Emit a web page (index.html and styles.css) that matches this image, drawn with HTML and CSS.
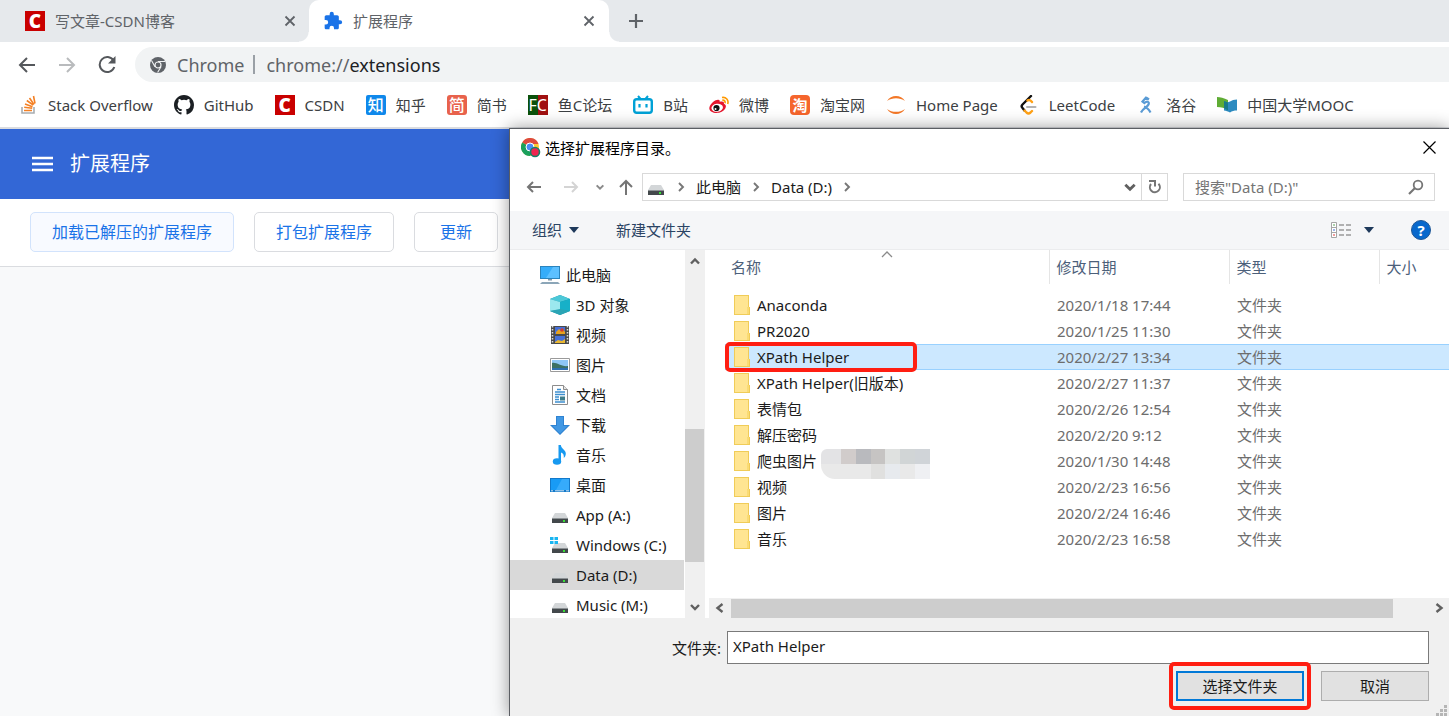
FILE: index.html
```html
<!DOCTYPE html>
<html lang="zh-CN">
<head>
  <meta charset="UTF-8" />
  <title>扩展程序</title>
  <meta name="viewport" content="width=device-width, initial-scale=1" />
  <link rel="stylesheet" href="styles.css">
</head>
<body>
  <!-- shared icons -->
  <svg class="defs" aria-hidden="true">
    <symbol id="i-close" viewBox="0 0 12 12"><path d="M1.5 1.5l9 9M10.5 1.5l-9 9" fill="none" stroke="#5f6368" stroke-width="1.8"/></symbol>
    <symbol id="i-folder" viewBox="0 0 16 20">
      <path d="M0 0h15v12h1v8H0z" fill="#f0cc58"/>
      <path d="M1 1h13v11l-1 1v6H1z" fill="#ffe592"/>
      <path d="M13 19v-6l1-1h1v7z" fill="#fadb74"/>
    </symbol>
    <symbol id="i-drive" viewBox="0 0 20 20">
      <path d="M5 8h10l3 5H2z" fill="#d3d6d8"/>
      <path d="M2 13h16v5H2z" fill="#43484b"/>
      <path d="M2 13h16v1H2z" fill="#8d9295"/>
      <path d="M13 15h2v2h-2z" fill="#38e038"/>
    </symbol>
    <symbol id="i-up" viewBox="0 0 12 12"><path d="M2 8.500l4-4 4 4" fill="none" stroke="#606060" stroke-width="2.400"/></symbol>
    <symbol id="i-down" viewBox="0 0 12 12"><path d="M2 4l4 4 4-4" fill="none" stroke="#606060" stroke-width="2.400"/></symbol>
    <symbol id="i-left" viewBox="0 0 12 12"><path d="M8.500 2l-5 4 5 4" fill="none" stroke="#606060" stroke-width="2.400"/></symbol>
    <symbol id="i-right" viewBox="0 0 12 12"><path d="M3.500 2l5 4-5 4" fill="none" stroke="#606060" stroke-width="2.400"/></symbol>
    <symbol id="i-crumb" viewBox="0 0 12 12"><path d="M4 2l4 4-4 4" fill="none" stroke="#777" stroke-width="1.900"/></symbol>
  </svg>

  <header class="browser">
    <div class="tabs">
      <div class="tab">
        <span class="logo csdn">C</span>
        <span class="tab-title">写文章-CSDN博客</span>
        <button aria-label="关闭"><svg width="12" height="12"><use href="#i-close"/></svg></button>
      </div>
      <div class="tab active">
        <svg width="20" height="20" viewBox="0 0 24 24" fill="#1a73e8"><path d="M20.500 11H19V7c0-1.100-.9-2-2-2h-4V3.500a2.500 2.500 0 0 0-5 0V5H4c-1.100 0-2 .9-2 2v3.800h1.500a2.700 2.700 0 0 1 0 5.400H2V20c0 1.100.9 2 2 2h3.800v-1.500a2.700 2.700 0 0 1 5.400 0V22H17c1.100 0 2-.9 2-2v-4h1.500a2.500 2.500 0 0 0 0-5z"/></svg>
        <span class="tab-title">扩展程序</span>
        <button aria-label="关闭"><svg width="12" height="12"><use href="#i-close"/></svg></button>
      </div>
      <button class="new-tab" aria-label="新标签页"><svg width="16" height="16" viewBox="0 0 16 16"><path d="M8 1v14M1 8h14" stroke="#5f6368" stroke-width="2.200"/></svg></button>
    </div>

    <div class="toolbar">
      <button aria-label="后退"><svg width="18" height="18" viewBox="0 0 18 18"><path d="M17 9H2M9 2L2 9l7 7" fill="none" stroke="#55585c" stroke-width="2"/></svg></button>
      <button aria-label="前进"><svg width="18" height="18" viewBox="0 0 18 18"><path d="M1 9h15M9 2l7 7-7 7" fill="none" stroke="#b9bbbd" stroke-width="2"/></svg></button>
      <button aria-label="重新加载"><svg width="18" height="18" viewBox="0 0 18 18"><path d="M15.500 4.500A7.500 7.500 0 1 0 16.300 11" fill="none" stroke="#55585c" stroke-width="2"/><path d="M17.500 0v7.500H10z" fill="#55585c"/></svg></button>
      <div class="omnibox">
        <svg width="16" height="16" viewBox="0 0 16 16"><circle cx="8" cy="8" r="8" fill="#5f6368"/><circle cx="8" cy="8" r="3" fill="#5f6368" stroke="#f1f3f4" stroke-width="1.200"/><path d="M8 4.500h7M5 9.700L1.500 3.600M11 9.700L7.600 15.600" stroke="#f1f3f4" stroke-width="1.100"/></svg>
        <span>Chrome</span>
        <span class="bar"></span>
        <span>chrome://<b>extensions</b></span>
      </div>
    </div>

    <nav class="bookmarks">
      <a href="#"><svg width="20" height="20" viewBox="0 0 20 20" fill="none"><path d="M4 12v6h12v-6" stroke="#a8adb1" stroke-width="1.600"/><path d="M6 15.500h8M6.200 12.300l8 1M7 9l7.500 2.700M8.800 5.500l6.500 4.700M11.500 3l4.500 6.500M15.500 1l1.500 7.500" stroke="#f48024" stroke-width="1.600"/></svg>Stack Overflow</a>
      <a href="#"><svg width="20" height="20" viewBox="0 0 16 16" fill="#1b1f23"><path d="M8 0C3.580 0 0 3.580 0 8c0 3.540 2.290 6.530 5.470 7.590.4.070.55-.17.55-.38 0-.19-.01-.82-.01-1.490-2.010.37-2.530-.49-2.690-.94-.09-.23-.48-.94-.82-1.130-.28-.15-.68-.52-.01-.53.63-.01 1.080.58 1.230.82.72 1.210 1.870.87 2.330.66.07-.52.28-.87.51-1.070-1.780-.2-3.640-.89-3.640-3.950 0-.87.31-1.590.82-2.150-.08-.2-.36-1.020.08-2.120 0 0 .67-.21 2.200.82a7.600 7.600 0 0 1 4 0c1.530-1.040 2.200-.82 2.200-.82.44 1.100.16 1.920.08 2.120.51.56.82 1.270.82 2.150 0 3.070-1.870 3.750-3.650 3.950.29.25.54.73.54 1.480 0 1.070-.01 1.930-.01 2.200 0 .21.15.46.55.38A8 8 0 0 0 16 8c0-4.420-3.580-8-8-8z"/></svg>GitHub</a>
      <a href="#"><span class="logo csdn">C</span>CSDN</a>
      <a href="#"><span class="logo zhihu">知</span>知乎</a>
      <a href="#"><span class="logo jianshu">简</span>简书</a>
      <a href="#"><span class="logo fishc">FC</span>鱼C论坛</a>
      <a href="#"><svg width="20" height="20" viewBox="0 0 20 20" fill="none" stroke="#00a1d6"><path d="M5 1l3 3.500M15 1l-3 3.500" stroke-width="2"/><rect x="1.200" y="4.200" width="17.600" height="13.600" rx="2.500" stroke-width="2.400"/><path d="M6.500 9v3.500M13.500 9v3.500" stroke-width="2.200"/></svg>B站</a>
      <a href="#"><svg width="20" height="20" viewBox="0 0 20 20"><path d="M8 5c2-.8 3 0 2.700 1.800 3-1 5 0 4.200 2 2 .8 2.600 2.500 1.500 4.500C13.500 19.500 1 19.500.3 13.500.3 10 4.500 5.500 8 5z" fill="#e6162d"/><ellipse cx="8.200" cy="12.800" rx="5.800" ry="4" fill="#fff" transform="rotate(-8 8.200 12.800)"/><circle cx="7.500" cy="13" r="3.100" fill="#111"/><circle cx="6.500" cy="14" r="1" fill="#fff"/><path d="M13 2.500c4-.7 7 2.500 5.700 6.500M13.300 5.200c2-.3 3.300 1 2.700 3" fill="none" stroke="#f90" stroke-width="1.600"/></svg>微博</a>
      <a href="#"><span class="logo taobao">淘</span>淘宝网</a>
      <a href="#"><svg width="20" height="20" viewBox="0 0 20 20" fill="#f37726"><path d="M1 6C5-.8 15-.8 19 6 14 2.200 6 2.200 1 6zM1 14c4 6.800 14 6.800 18 0-5 3.800-13 3.800-18 0z"/></svg>Home Page</a>
      <a href="#"><svg width="20" height="20" viewBox="0 0 20 20" fill="none" stroke-width="2.400" stroke-linecap="round"><path d="M12 1L3.500 9.500a2.500 2.500 0 0 0 0 3.500l2 2.500" stroke="#111"/><path d="M5.500 15.500l2 2a3 3 0 0 0 4 0l1.500-1.500M8.500 5.500c1.500-1 3-.5 4.500 1.500" stroke="#ffa116"/><path d="M8 12h8.500" stroke="#b3b3b3" stroke-width="2"/></svg>LeetCode</a>
      <a href="#"><svg width="20" height="20" viewBox="0 0 20 20" fill="none" stroke="#5a9bd5" stroke-width="2.200"><path d="M10.500 2L6.500 6.500l2 1.500c3-2.500 5-1 4 1.500S7 13 5 17.500M8 11.500c3 1 5 3 6.500 6M10 2.500l3 2"/></svg>洛谷</a>
      <a href="#"><svg width="20" height="20" viewBox="0 0 20 20"><path d="M0 2c3 .2 7 1 11 3v10C8 13 4 12 0 12z" fill="#5fac34"/><path d="M7 6c3 1.500 4 1.500 6 .5 2-1.200 4-2 7-2v11c-3 0-5 .5-7 2-2-1-4-2-6-2z" fill="#2d8bc0"/><path d="M7 6l4 1.500v8L7 13z" fill="#197a87"/></svg>中国大学MOOC</a>
    </nav>
  </header>

  <main class="page">
    <div class="page-head">
      <button aria-label="主菜单"><svg width="21" height="16" viewBox="0 0 21 16"><path d="M0 2h21M0 8h21M0 14h21" stroke="#fff" stroke-width="2.400"/></svg></button>
      <h1>扩展程序</h1>
    </div>
    <div class="dev-bar">
      <button class="focused">加载已解压的扩展程序</button>
      <button>打包扩展程序</button>
      <button class="small">更新</button>
    </div>
  </main>

  <section class="dialog" role="dialog" aria-labelledby="dlg-title">
    <div class="dlg-title">
      <svg width="20" height="20" viewBox="0 0 20 20">
        <circle cx="9" cy="9" r="9" fill="#fbc934"/>
        <path d="M9 9L1.200 4.500A9 9 0 0 1 17.500 6L9 6z" fill="#dd4b3e"/>
        <path d="M9 9L1.200 4.500A9 9 0 0 0 9 18l4-6z" fill="#1aa05c"/>
        <circle cx="9" cy="9" r="4" fill="#4b8bf4" stroke="#fff" stroke-width="1"/>
        <circle cx="14" cy="14" r="4.500" fill="#f0244f" stroke="#168069" stroke-width="1.600"/>
      </svg>
      <h2 id="dlg-title">选择扩展程序目录。</h2>
      <button aria-label="关闭"><svg width="13" height="13" viewBox="0 0 13 13"><path d="M.5.5l12 12M12.500.5l-12 12" stroke="#000" stroke-width="1.200"/></svg></button>
    </div>

    <div class="dlg-address">
      <button class="arrow" aria-label="后退"><svg width="16" height="16" viewBox="0 0 16 16"><path d="M15 8H2M7 3L2 8l5 5" fill="none" stroke="#757575" stroke-width="2"/></svg></button>
      <button class="arrow forward" aria-label="前进"><svg width="16" height="16" viewBox="0 0 16 16"><path d="M1 8h13M9 3l5 5-5 5" fill="none" stroke="#d4d4d4" stroke-width="2"/></svg></button>
      <button class="recent" aria-label="最近的位置"><svg width="10" height="10" viewBox="0 0 12 12"><path d="M2 4l4 4 4-4" fill="none" stroke="#8a8a8a" stroke-width="2.400"/></svg></button>
      <button class="parent" aria-label="上移"><svg width="16" height="16" viewBox="0 0 16 16"><path d="M8 16V2M2 8l6-6 6 6" fill="none" stroke="#757575" stroke-width="2"/></svg></button>
      <div class="crumbs">
        <svg width="20" height="20"><use href="#i-drive"/></svg>
        <svg width="12" height="12"><use href="#i-crumb"/></svg>
        <a href="#">此电脑</a>
        <svg width="12" height="12"><use href="#i-crumb"/></svg>
        <a href="#">Data (D:)</a>
        <svg width="12" height="12"><use href="#i-crumb"/></svg>
        <button class="history" aria-label="历史记录"><svg width="14" height="14"><use href="#i-down"/></svg></button>
      </div>
      <button class="refresh" aria-label="刷新"><svg width="14" height="16" viewBox="0 0 14 16"><path d="M3 5a5 5 0 1 0 7.500-.3" fill="none" stroke="#757575" stroke-width="2"/><path d="M1 2h6v5.500" fill="none" stroke="#757575" stroke-width="2"/></svg></button>
      <label class="search">
        <input type="text" placeholder='搜索"Data (D:)"' aria-label="搜索">
        <svg width="16" height="16" viewBox="0 0 16 16"><circle cx="10" cy="6" r="4.300" fill="none" stroke="#757575" stroke-width="1.800"/><path d="M7 9l-6 6" stroke="#757575" stroke-width="2.200"/></svg>
      </label>
    </div>

    <div class="dlg-commands">
      <button>组织<span class="caret"></span></button>
      <button>新建文件夹</button>
      <button class="view" aria-label="更改视图">
        <svg width="21" height="16" viewBox="0 0 21 16"><path d="M.5.5h5v15h-5zM.5 5.500h5M.5 10.500h5" fill="#fff" stroke="#a5a5a5"/><path d="M8 3h5M15 3h5M8 8h5M15 8h5M8 13h5M15 13h5" stroke="#999" stroke-width="1.400"/><path d="M2 2.500h2v1H2z" fill="#5aa65a"/><path d="M2 7.500h2v1H2z" fill="#3b6fe0"/><path d="M2 12.500h2v1H2z" fill="#e03b3b"/></svg>
        <span class="caret"></span>
      </button>
      <button class="help" aria-label="帮助">?</button>
    </div>

    <div class="dlg-body">
      <ul class="tree">
        <li class="root"><svg width="20" height="20" viewBox="0 0 20 20"><path d="M0 1h20v13H0z" fill="#2b84bd"/><path d="M1 2h18v11H1z" fill="#35adfa"/><path d="M13 2h6v11H6z" fill="#5dc0ff"/><path d="M8 14h4v1.500H8z" fill="#7f99ab"/><path d="M2 17h16l2 2H0z" fill="#8ba6b8"/></svg>此电脑</li>
        <li><svg width="20" height="20" viewBox="0 0 20 20"><path d="M10 0l10 4v12l-10 4-10-4V4z" fill="#1795aa"/><path d="M10 0l10 4-10 3L0 4z" fill="#4cc8d8"/><path d="M0 4l10 3v8L0 16z" fill="#9be8ee"/><path d="M10 7l10-3v12l-10-1z" fill="#17b0c8"/><path d="M0 16l10-2 10 2-10 4z" fill="#2aa5b5"/></svg>3D 对象</li>
        <li><svg width="20" height="20" viewBox="0 0 20 20"><path d="M1 1h18v18H1z" fill="#4a4a4a"/><path d="M2.500 1v18M17.500 1v18" stroke="#ddd" stroke-width="1.500" stroke-dasharray="1.500 1.500"/><path d="M5 2h10v7H5zM5 11h10v7H5z" fill="#4670d8"/><path d="M6 7l3-3 2 2 2-2 2 3v2H6z" fill="#e8a21e"/><circle cx="12" cy="5" r="1.800" fill="#d83a2e"/><path d="M5 17l3-2 4 1 3-2v4H5z" fill="#e9b731"/></svg>视频</li>
        <li><svg width="20" height="20" viewBox="0 0 20 20"><path d="M.5 3.500h19v13H.5z" fill="#fff" stroke="#9a9a9a"/><path d="M2 5h16v10H2z" fill="#8fc6f5"/><path d="M2 8c5-1 9 4 16 3v4H2z" fill="#3d7064"/><path d="M2 13h16v2H2z" fill="#2f6fb0"/></svg>图片</li>
        <li><svg width="20" height="20" viewBox="0 0 20 20"><path d="M2.500.5h11l4 4v15h-15z" fill="#fff" stroke="#8c8c8c"/><path d="M13.500.5v4h4" fill="#e5e5e5" stroke="#8c8c8c"/><path d="M5 7h10M5 9.500h10M5 12h4M5 14.500h4M5 17h10M7 4.500h4" stroke="#3d8fd0" stroke-width="1.300"/><path d="M10 11.500h5v4h-5z" fill="#3f7d8b"/></svg>文档</li>
        <li><svg width="20" height="20" viewBox="0 0 20 20"><path d="M6 1h8v9h6L10 20 0 10h6z" fill="#2f83d2"/><path d="M7 2h6v9h4.500L10 18.500 2.500 11H7z" fill="#4198e4"/></svg>下载</li>
        <li><svg width="20" height="20" viewBox="0 0 20 20" fill="#1799f0"><ellipse cx="7" cy="16.500" rx="4.200" ry="3.300"/><path d="M8.500 0h2.300c.3 4 5.500 5 5 9-.2 2-1 3-2 4 .3-3-.6-5-2.800-5.500V17H8.500z"/></svg>音乐</li>
        <li><svg width="20" height="20" viewBox="0 0 20 20"><path d="M0 3h20v14H0z" fill="#1279ca"/><path d="M1 4h18v11H1z" fill="#189bf5"/><path d="M12 4h7v11H6z" fill="#36abfb"/><path d="M1 15.800h2M5 15.800h9M16 15.800h3" stroke="#fff" stroke-width=".8"/></svg>桌面</li>
        <li><svg width="20" height="20"><use href="#i-drive"/></svg>App (A:)</li>
        <li><svg width="20" height="20" viewBox="0 0 20 20"><use href="#i-drive"/><path d="M0 2h3.500v3H0zM4.500 2H8v3H4.500zM0 6h3.500v3H0zM4.500 6H8v3H4.500z" fill="#19b5f1"/></svg>Windows (C:)</li>
        <li class="selected"><svg width="20" height="20"><use href="#i-drive"/></svg>Data (D:)</li>
        <li><svg width="20" height="20"><use href="#i-drive"/></svg>Music (M:)</li>
      </ul>
      <div class="vscroll">
        <svg width="12" height="12"><use href="#i-up"/></svg>
        <div class="track"><div class="thumb"></div></div>
        <svg width="12" height="12"><use href="#i-down"/></svg>
      </div>

      <div class="files">
        <table>
          <colgroup><col class="c-name"><col class="c-date"><col class="c-type"><col></colgroup>
          <thead>
            <tr>
              <th>名称<svg class="sort" width="12" height="8" viewBox="0 0 12 8"><path d="M1 7l5-5 5 5" fill="none" stroke="#8a8a8a" stroke-width="1.300"/></svg></th>
              <th>修改日期</th>
              <th>类型</th>
              <th>大小</th>
            </tr>
          </thead>
          <tbody>
            <tr><td><svg width="16" height="20"><use href="#i-folder"/></svg>Anaconda</td><td>2020/1/18 17:44</td><td>文件夹</td><td></td></tr>
            <tr><td><svg width="16" height="20"><use href="#i-folder"/></svg>PR2020</td><td>2020/1/25 11:30</td><td>文件夹</td><td></td></tr>
            <tr class="selected"><td><svg width="16" height="20"><use href="#i-folder"/></svg>XPath Helper<span class="mark"></span></td><td>2020/2/27 13:34</td><td>文件夹</td><td></td></tr>
            <tr><td><svg width="16" height="20"><use href="#i-folder"/></svg>XPath Helper(旧版本)</td><td>2020/2/27 11:37</td><td>文件夹</td><td></td></tr>
            <tr><td><svg width="16" height="20"><use href="#i-folder"/></svg>表情包</td><td>2020/2/26 12:54</td><td>文件夹</td><td></td></tr>
            <tr><td><svg width="16" height="20"><use href="#i-folder"/></svg>解压密码</td><td>2020/2/20 9:12</td><td>文件夹</td><td></td></tr>
            <tr><td><svg width="16" height="20"><use href="#i-folder"/></svg>爬虫图片<span class="mosaic"><i></i><i></i><i></i><i></i><i></i><i></i><i></i><i></i><i></i><i></i><i></i><i></i><i></i><i></i></span></td><td>2020/1/30 14:48</td><td>文件夹</td><td></td></tr>
            <tr><td><svg width="16" height="20"><use href="#i-folder"/></svg>视频</td><td>2020/2/23 16:56</td><td>文件夹</td><td></td></tr>
            <tr><td><svg width="16" height="20"><use href="#i-folder"/></svg>图片</td><td>2020/2/24 16:46</td><td>文件夹</td><td></td></tr>
            <tr><td><svg width="16" height="20"><use href="#i-folder"/></svg>音乐</td><td>2020/2/23 16:58</td><td>文件夹</td><td></td></tr>
          </tbody>
        </table>
        <div class="hscroll">
          <svg width="12" height="12"><use href="#i-left"/></svg>
          <div class="track"><div class="thumb"></div></div>
          <svg width="12" height="12"><use href="#i-right"/></svg>
        </div>
      </div>
    </div>

    <div class="dlg-foot">
      <div class="field">
        <label for="folder">文件夹:</label>
        <input type="text" id="folder" value="XPath Helper">
      </div>
      <div class="actions">
        <button class="primary">选择文件夹<span class="mark"></span></button>
        <button>取消</button>
      </div>
      <svg class="grip" width="11" height="11" viewBox="0 0 11 11" fill="#b5b5b5"><path d="M8 0h3v3H8zM4 4h3v3H4zM8 4h3v3H8zM0 8h3v3H0zM4 8h3v3H4zM8 8h3v3H8z"/></svg>
    </div>
  </section>
</body>
</html>
```
FILE: styles.css
```css
* {
  margin: 0; padding: 0; box-sizing: border-box;
}

body {
  position: relative;
  display: flex;
  flex-direction: column;
  min-height: 100vh;
  overflow: hidden;
  font-family: "Noto Sans", "Noto Sans CJK SC", sans-serif;
  font-size: 15px;
  line-height: 20px;
  color: #3c4043;
  background: #f8f9fa;
}

button, input {
  font: inherit;
  color: inherit;
  border: none;
  background: none;
}

svg {
  flex: none;
}

a {
  color: inherit;
  text-decoration: none;
}

.defs {
  position: absolute;
  width: 0;
  height: 0;
}

/* browser */
.browser {
  background: #fff;
  border-bottom: 2px solid #dadce0;
}

.tabs {
  display: flex;
  height: 42px;
  background: #e6e9ec;
}

.tab {
  display: flex;
  align-items: center;
  width: 309px;
  padding: 0 13px 0 25px;
  color: #5f6368;
}

.tab.active {
  position: relative;
  width: 300px;
  padding: 0 14px;
  background: #fff;
  border-radius: 10px 10px 0 0;
}

/* flared feet of the active tab */
.tab.active::before,
.tab.active::after {
  content: "";
  position: absolute;
  bottom: 0;
  width: 10px;
  height: 10px;
}

.tab.active::before {
  right: 100%;
  background: radial-gradient(circle at 0 0, transparent 9px, #fff 10px);
}

.tab.active::after {
  left: 100%;
  background: radial-gradient(circle at 100% 0, transparent 9px, #fff 10px);
}

.tab-title {
  flex: 1;
  margin-left: 10px;
}

.tab button {
  display: flex;
}

.new-tab {
  display: flex;
  align-items: center;
  margin-left: 19px;
}

.logo {
  display: block;
  flex: none;
  width: 20px;
  height: 20px;
  line-height: 20px;
  text-align: center;
  color: #fff;
  border-radius: 2px;
}

.csdn {
  background: #c90000;
  border-radius: 0;
  font-size: 19px;
  font-weight: 900;
}

.zhihu {
  background: #0f88eb;
  font-size: 16px;
  font-weight: 500;
}

.jianshu {
  background: #e8624c;
  border-radius: 3px;
  font-size: 16px;
  font-weight: 500;
}

.fishc {
  background: linear-gradient(90deg, #0b510b 50%, #a01010 50%);
  border-radius: 0;
  font-size: 16px;
}

.taobao {
  background: #f5652c;
  border-radius: 4px;
  font-weight: 700;
}

.toolbar {
  display: flex;
  align-items: center;
  padding: 5px 0 5px 18px;
}

.toolbar > button {
  display: flex;
  margin-right: 22px;
}

.omnibox {
  flex: 1;
  display: flex;
  align-items: center;
  height: 35px;
  margin-left: -3px;
  padding-left: 15px;
  border-radius: 18px 0 0 18px;
  background: #f1f3f4;
  font-size: 18px;
  color: #5f6368;
}

.omnibox svg {
  margin-right: 11px;
}

.omnibox b {
  font-weight: 400;
  color: #202124;
}

.bar {
  width: 2px;
  height: 19px;
  margin: 0 11px 0 9px;
  background: #9aa0a6;
}

.bookmarks {
  display: flex;
  gap: 21px;
  height: 40px;
  padding: 8px 0 12px 18px;
}

.bookmarks a {
  display: flex;
  align-items: center;
  gap: 10px;
  white-space: nowrap;
}

/* extensions page */
.page-head {
  display: flex;
  align-items: center;
  gap: 17px;
  height: 70px;
  padding-left: 32px;
  color: #fff;
  background: #3367d6;
}

.page-head button {
  display: flex;
}

.page-head h1 {
  font-size: 20px;
  line-height: 28px;
  font-weight: 400;
}

.dev-bar {
  display: flex;
  gap: 20px;
  padding: 13px 30px 14px;
  background: #fff;
  border-bottom: 1px solid #dadce0;
}

.dev-bar button {
  height: 40px;
  padding: 0 21px;
  border: 1px solid #dadce0;
  border-radius: 5px;
  font-size: 16px;
  color: #1a73e8;
}

.dev-bar .focused {
  background: #f8faff;
  border-color: #d2e3fc;
}

.dev-bar .small {
  padding: 0 25px;
}

/* folder picker */
.dialog {
  position: absolute;
  top: 128px;
  right: 0;
  bottom: 0;
  left: 509px;
  display: flex;
  flex-direction: column;
  border: solid #5b5e63;
  border-width: 1px 0 0 1px;
  background: #fff;
  color: #1b1b1b;
  box-shadow: 0 0 16px rgba(0, 0, 0, 0.4);
}

.dlg-title {
  display: flex;
  align-items: center;
  gap: 4px;
  height: 38px;
  padding: 0 13px 0 11px;
  color: #000;
}

.dlg-title h2 {
  flex: 1;
  font-size: 15px;
  font-weight: 400;
}

.dlg-address {
  display: flex;
  align-items: center;
  height: 44px;
  padding: 6px 14px 10px 16px;
}

.dlg-address button {
  display: flex;
  align-items: center;
  justify-content: center;
}

.dlg-address .forward {
  margin-left: 21px;
}

.recent {
  margin: 0 13px 0 16px;
}

.parent {
  margin-right: 8px;
}

.crumbs {
  flex: 1;
  display: flex;
  align-items: center;
  gap: 9px;
  height: 28px;
  padding: 0 4px 0 3px;
  border: 1px solid #d9d9d9;
}

.history {
  margin-left: auto;
}

.dlg-address .refresh {
  width: 26px;
  height: 28px;
  border: 1px solid #d9d9d9;
  border-left: none;
}

.search {
  display: flex;
  align-items: center;
  width: 252px;
  height: 28px;
  margin-left: 15px;
  padding: 0 10px 0 11px;
  border: 1px solid #d9d9d9;
}

.search input {
  flex: 1;
  min-width: 0;
}

.search input::placeholder {
  color: #757575;
}

.dlg-commands {
  display: flex;
  align-items: center;
  height: 39px;
  padding: 0 18px 0 22px;
  background: #f5f6f8;
  border-bottom: 1px solid #ebecee;
  color: #2b4464;
}

.dlg-commands button {
  display: flex;
  align-items: center;
  gap: 7px;
  margin-right: 37px;
}

.caret {
  border: 5px solid transparent;
  border-top: 6px solid #1e395b;
  border-bottom: none;
}

.dlg-commands .view {
  gap: 12px;
  margin-left: auto;
}

.dlg-commands .help {
  justify-content: center;
  width: 20px;
  height: 20px;
  margin-right: 0;
  border: 1px solid #1f5796;
  border-radius: 50%;
  background: #0868cc;
  color: #fff;
  font-weight: 700;
}

.dlg-body {
  flex: 1;
  display: flex;
  min-height: 0;
}

.tree {
  width: 174px;
  padding-top: 10px;
  overflow: hidden;
  list-style: none;
}

.tree li {
  display: flex;
  align-items: center;
  gap: 6px;
  height: 30px;
  padding-left: 40px;
  white-space: nowrap;
}

.tree .root {
  padding-left: 30px;
}

.tree .selected {
  background: #d9d9d9;
}

.vscroll {
  display: flex;
  flex-direction: column;
  align-items: center;
  justify-content: space-between;
  width: 20px;
  margin-left: 1px;
  padding: 5px 0;
  background: #f0f0f0;
}

.vscroll .track {
  flex: 1;
  display: flex;
  flex-direction: column;
  justify-content: flex-end;
  align-self: stretch;
  padding: 0 1px 39px 0;
}

.vscroll .thumb {
  height: 45%;
  background: #cdcdcd;
}

.files {
  flex: 1;
  display: flex;
  flex-direction: column;
  justify-content: space-between;
  min-width: 0;
  margin-left: 4px;
}

.files table {
  width: calc(100% - 16px);
  margin-left: 16px;
  table-layout: fixed;
  border-collapse: collapse;
}

.c-name {
  width: 324px;
}

.c-date {
  width: 180px;
}

.c-type {
  width: 150px;
}

.files th {
  position: relative;
  height: 34px;
  padding-left: 7px;
  border-right: 1px solid #e5e5e5;
  text-align: left;
  font-weight: 400;
  color: #4c607a;
}

.files th:last-child {
  border-right: none;
}

.files th:first-child {
  padding-left: 6px;
}

.sort {
  position: absolute;
  top: 0;
  left: 50%;
  margin-left: -6px;
}

.files tbody::before {
  content: "";
  display: block;
  height: 8px;
}

.files td {
  height: 26px;
  padding-left: 8px;
  white-space: nowrap;
  color: #6d6d6d;
}

.files td:first-child {
  position: relative;
  padding-left: 9px;
  color: #1b1b1b;
}

.files td svg {
  margin-right: 7px;
  vertical-align: top;
}

.files .selected {
  background: #cce8ff;
  box-shadow: inset 0 1px #99d1ff, inset 0 -1px #99d1ff;
}

.mark {
  position: absolute;
  border: 4px solid #ff1e12;
  border-radius: 5px;
}

.selected .mark {
  top: -2px;
  bottom: -2px;
  left: 0;
  width: 192px;
}

.mosaic {
  position: absolute;
  top: 1px;
  left: 96px;
  display: grid;
  grid-template-columns: 20px repeat(6, 1fr);
  width: 109px;
  height: 30px;
  border-radius: 6px 0 0 14px;
  overflow: hidden;
}

.mosaic i { background: #e3e3e5; }
.mosaic i:nth-child(2) { background: #d1cccb; }
.mosaic i:nth-child(3) { background: #b9babe; }
.mosaic i:nth-child(4) { background: #c6c4c3; }
.mosaic i:nth-child(5) { background: #dfe1e0; }
.mosaic i:nth-child(6) { background: #d1d5d6; }
.mosaic i:nth-child(7) { background: #d0d4d8; }
.mosaic i:nth-child(n+8) { background: #e9e9e9; }
.mosaic i:nth-child(11) { background: #e0e0df; }
.mosaic i:nth-child(12) { background: #e7eaee; }
.mosaic i:nth-child(14) { background: #eff0f3; }

.hscroll {
  display: flex;
  align-items: center;
  height: 20px;
  padding: 0 4px 0 5px;
  background: #f0f0f0;
}

.hscroll .track {
  flex: 1;
  margin: 0 5px;
}

.hscroll .thumb {
  width: 95%;
  height: 19px;
  background: #cdcdcd;
}

.dlg-foot {
  position: relative;
  padding: 13px 20px 15px 0;
  background: #f0f0f0;
}

.field {
  display: flex;
  align-items: center;
  margin-bottom: 7px;
}

.field label {
  width: 217px;
  padding-right: 6px;
  text-align: right;
}

.field input {
  flex: 1;
  height: 33px;
  padding: 0 5px 3px;
  border: 1px solid #7a7a7a;
  background: #fff;
}

.actions {
  display: flex;
  justify-content: flex-end;
  gap: 17px;
}

.actions button {
  position: relative;
  width: 108px;
  height: 30px;
  border: 1px solid #adadad;
  background: #e1e1e1;
}

.actions .primary {
  width: 128px;
  border: 2px solid #0078d7;
}

.primary .mark {
  top: -11px;
  right: -9px;
  bottom: -11px;
  left: -9px;
}

.grip {
  position: absolute;
  right: 2px;
  bottom: 0;
}
```
